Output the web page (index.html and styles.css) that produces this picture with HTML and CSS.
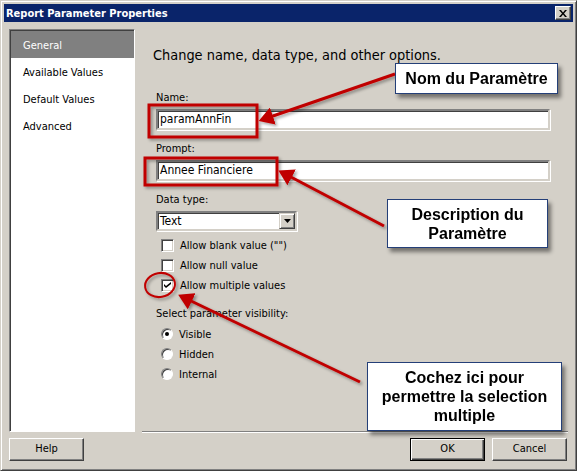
FILE: index.html
```html
<!DOCTYPE html>
<html lang="en">
<head>
    <meta charset="UTF-8">
    <title>Report Parameter Properties</title>
    <link rel="stylesheet" href="styles.css">
</head>
<body>
    <div class="window">
        <div class="titlebar">
            <span class="title">Report Parameter Properties</span>
            <span class="close-btn">
                <svg width="8" height="7" viewBox="0 0 8 7"><path d="M0 0h2l2 2.5L6 0h2L5 3.5 8 7H6L4 4.5 2 7H0l3-3.5z" fill="#000"/></svg>
            </span>
        </div>

        <div class="main">
            <div class="nav">
                <div class="nav-item selected">General</div>
                <div class="nav-item">Available Values</div>
                <div class="nav-item">Default Values</div>
                <div class="nav-item">Advanced</div>
            </div>

            <div class="content">
                <div class="heading">Change name, data type, and other options.</div>

                <div class="form">
                    <div class="label first">Name:</div>
                    <div class="textbox">paramAnnFin</div>

                    <div class="label">Prompt:</div>
                    <div class="textbox">Annee Financiere</div>

                    <div class="label">Data type:</div>
                    <div class="select">
                        <span class="select-value">Text</span>
                        <span class="select-btn">
                            <svg width="7" height="4" viewBox="0 0 7 4"><path d="M0 0h7L3.5 4z" fill="#000"/></svg>
                        </span>
                    </div>

                    <div class="checks">
                        <div class="check-row"><span class="checkbox"></span>Allow blank value ("")</div>
                        <div class="check-row"><span class="checkbox"></span>Allow null value</div>
                        <div class="check-row">
                            <span class="checkbox">
                                <svg width="7" height="7" viewBox="0 0 7 7"><path d="M0 2l2 2 5-4v2L2 6 0 4z" fill="#000"/></svg>
                            </span>Allow multiple values
                        </div>
                    </div>

                    <div class="label vis-label">Select parameter visibility:</div>
                    <div class="radios">
                        <div class="radio-row"><span class="radio checked"></span>Visible</div>
                        <div class="radio-row"><span class="radio"></span>Hidden</div>
                        <div class="radio-row"><span class="radio"></span>Internal</div>
                    </div>
                </div>
            </div>
        </div>

        <div class="footer">
            <span class="btn">Help</span>
            <span class="spacer"></span>
            <span class="btn default">OK</span>
            <span class="btn">Cancel</span>
        </div>

        <!-- annotations drawn over the dialog -->
        <svg class="marks" width="577" height="471" viewBox="0 0 577 471">
            <defs>
                <filter id="shade" x="-20%" y="-20%" width="140%" height="140%">
                    <feDropShadow dx="2" dy="2" stdDeviation="1.5" flood-color="#000" flood-opacity="0.35"/>
                </filter>
                <marker id="head" markerWidth="6" markerHeight="6" refX="1" refY="3" orient="auto" markerUnits="strokeWidth">
                    <path d="M0 0L5 3L0 6z" fill="#c00000"/>
                </marker>
            </defs>
            <g filter="url(#shade)" fill="none" stroke="#c00000">
                <rect x="149" y="105" width="108" height="32" stroke-width="3"/>
                <rect x="145" y="158" width="132" height="27" stroke-width="3"/>
                <ellipse cx="160" cy="285" rx="15" ry="12" stroke-width="2" transform="rotate(-10 160 285)"/>
                <line x1="395" y1="74" x2="270" y2="117" stroke-width="3" marker-end="url(#head)"/>
                <line x1="384" y1="226" x2="289" y2="176" stroke-width="3" marker-end="url(#head)"/>
                <line x1="360" y1="382" x2="189" y2="300" stroke-width="3" marker-end="url(#head)"/>
            </g>
        </svg>

        <div class="callout c-name">Nom du Paramètre</div>
        <div class="callout c-desc">Description du<br>Paramètre</div>
        <div class="callout c-check">Cochez ici pour<br>permettre la selection<br>multiple</div>
    </div>
</body>
</html>
```

FILE: styles.css
```css
* {
    box-sizing: border-box;
}
body {
    margin: 0;
    background-color: #d4d0c8;
    font-family: "DejaVu Sans Condensed", "Liberation Sans", Arial, sans-serif;
    font-size: 11px;
    color: #000;
}
.window {
    position: relative;
    width: 577px;
    height: 471px;
    padding: 3px;
    background-color: #d4d0c8;
    border: 1px solid;
    border-color: #d4d0c8 #404040 #404040 #d4d0c8;
    box-shadow: inset 1px 1px #fff, inset -1px -1px #808080;
    display: flex;
    flex-direction: column;
}
.titlebar {
    height: 18px;
    background-color: #0a246a;
    display: flex;
    align-items: center;
    padding: 0 2px 0 2px;
}
.title {
    flex: 1;
    color: #fff;
    font-weight: bold;
    font-size: 11px;
    font-family: "DejaVu Sans Condensed", "Liberation Sans", sans-serif;
}
.close-btn {
    width: 16px;
    height: 14px;
    background-color: #d4d0c8;
    border: 1px solid;
    border-color: #fff #404040 #404040 #fff;
    box-shadow: inset -1px -1px #808080;
    display: flex;
    align-items: center;
    justify-content: center;
}

.main {
    display: flex;
    height: 410px;
    padding-top: 7px;
}
.nav {
    width: 126px;
    margin-left: 5px;
    background-color: #fff;
    border: 1px solid;
    border-color: #808080 #fff #fff #808080;
    box-shadow: inset 1px 1px #404040;
    padding: 1px 0 0 1px;
}
.nav-item {
    height: 27px;
    line-height: 29px;
    padding-left: 12px;
    font-size: 11px;
}
.nav-item.selected {
    background-color: #808080;
    color: #fff;
}
.content {
    flex: 1;
    margin: 0 5px 0 7px;
    border-bottom: 1px solid #808080;
    box-shadow: 0 1px #fff;
}
.heading {
    font-size: 14.4px;
    padding: 17px 0 0 11px;
    line-height: 18px;
}
.form {
    padding: 0 18px 0 14px;
}
.label {
    line-height: 13px;
    margin-top: 12px;
    margin-bottom: 5px;
}
.label.first {
    margin-top: 27px;
}
.textbox {
    height: 21px;
    line-height: 17px;
    background-color: #fff;
    border: 2px solid;
    border-color: #808080 #d4d0c8 #d4d0c8 #808080;
    box-shadow: inset 1px 1px #404040, 1px 1px #fff;
    padding-left: 2px;
    font-size: 12px;
}
.select {
    width: 141px;
    height: 20px;
    background-color: #fff;
    border: 2px solid;
    border-color: #808080 #d4d0c8 #d4d0c8 #808080;
    box-shadow: inset 1px 1px #404040, 1px 1px #fff;
    display: flex;
    align-items: center;
    font-size: 12px;
}
.select-value {
    flex: 1;
    padding-left: 2px;
}
.select-btn {
    width: 16px;
    height: 16px;
    background-color: #d4d0c8;
    border: 1px solid;
    border-color: #d4d0c8 #404040 #404040 #d4d0c8;
    box-shadow: inset 1px 1px #fff, inset -1px -1px #808080;
    display: flex;
    align-items: center;
    justify-content: center;
}
.checks {
    margin-top: 4px;
}
.check-row,
.radio-row {
    height: 20px;
    display: flex;
    align-items: center;
    padding-left: 5px;
}
.checkbox {
    width: 13px;
    height: 13px;
    margin-right: 6px;
    background-color: #fff;
    border: 1px solid;
    border-color: #808080 #fff #fff #808080;
    box-shadow: inset 1px 1px #404040, inset -1px -1px #d4d0c8;
    display: flex;
    align-items: center;
    justify-content: center;
}
.label.vis-label {
    margin-top: 12px;
    margin-bottom: 4px;
}
.radio {
    width: 12px;
    height: 12px;
    margin-right: 6px;
    border-radius: 50%;
    background-color: #fff;
    border: 1px solid;
    border-color: #808080 #fff #fff #808080;
    box-shadow: inset 1px 1px #404040;
    position: relative;
}
.radio.checked::after {
    content: "";
    position: absolute;
    left: 3px;
    top: 3px;
    width: 4px;
    height: 4px;
    border-radius: 50%;
    background-color: #000;
}

.footer {
    display: flex;
    gap: 7px;
    margin-top: 6px;
    padding: 0 6px 0 5px;
}
.spacer {
    flex: 1;
}
.btn {
    width: 75px;
    height: 23px;
    line-height: 19px;
    text-align: center;
    background-color: #d4d0c8;
    border: 1px solid;
    border-color: #fff #404040 #404040 #fff;
    box-shadow: inset -1px -1px #808080;
}
.btn.default {
    border-color: #000;
    box-shadow: inset 1px 1px #fff, inset -1px -1px #404040, inset -2px -2px #808080;
}

.marks {
    position: absolute;
    left: -1px;
    top: -1px;
    pointer-events: none;
}
.callout {
    position: absolute;
    background-color: #fff;
    border: 1px solid #243f78;
    box-shadow: 3px 4px 4px rgba(0, 0, 0, 0.45);
    font-family: "Liberation Sans", Arial, sans-serif;
    font-weight: bold;
    font-size: 16px;
    line-height: 19px;
    text-align: center;
    display: flex;
    align-items: center;
    justify-content: center;
}
.c-name {
    left: 394px;
    top: 62px;
    width: 163px;
    height: 31px;
}
.c-desc {
    left: 386px;
    top: 198px;
    width: 161px;
    height: 49px;
}
.c-check {
    left: 366px;
    top: 361px;
    width: 195px;
    height: 69px;
}
```
